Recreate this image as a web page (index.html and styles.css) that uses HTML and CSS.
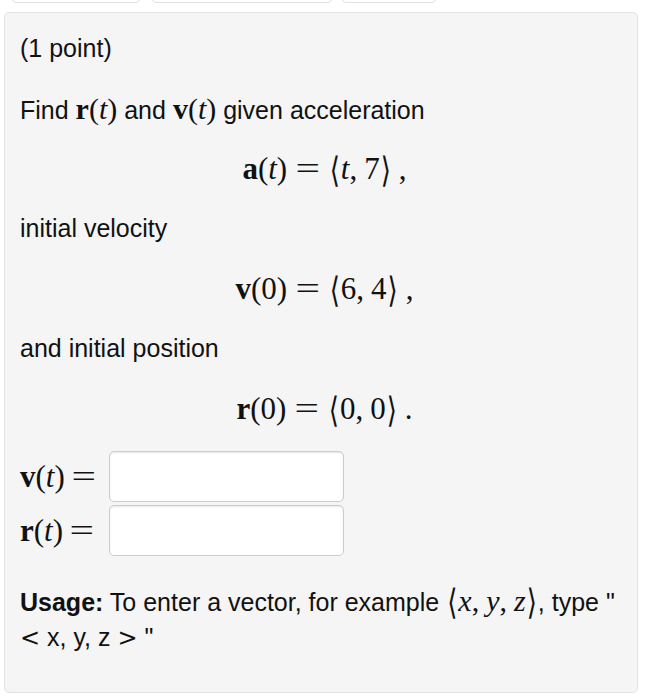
FILE: index.html
```html
<!DOCTYPE html>
<html>
<head>
<meta charset="utf-8">
<link rel="stylesheet" href="styles.css">
</head>
<body>
<div class="tabs">
  <div class="tab t1"></div>
  <div class="tab t2"></div>
  <div class="tab t3"></div>
</div>
<div class="card">
  <p class="line">(1 point)</p>
  <p class="line">Find <span class="m mi"><b>r</b>(<i>t</i>)</span> and <span class="m mi"><b>v</b>(<i>t</i>)</span> given acceleration</p>
  <div class="eq"><span class="m"><b>a</b>(<i>t</i>)<span class="rel">=</span><span class="ang">⟨</span><i>t</i>,<span class="th"></span>7<span class="ang">⟩</span><span class="th"></span>,</span></div>
  <p class="line">initial velocity</p>
  <div class="eq"><span class="m"><b>v</b>(0)<span class="rel">=</span><span class="ang">⟨</span>6,<span class="th"></span>4<span class="ang">⟩</span><span class="th"></span>,</span></div>
  <p class="line">and initial position</p>
  <div class="eq"><span class="m"><b>r</b>(0)<span class="rel">=</span><span class="ang">⟨</span>0,<span class="th"></span>0<span class="ang">⟩</span><span class="th"></span>.</span></div>
  <div class="answers">
    <div class="row"><span class="label m"><b>v</b>(<i>t</i>)<span class="rel lrel">=</span></span><input class="box" type="text"></div>
    <div class="row"><span class="label m"><b>r</b>(<i>t</i>)<span class="rel lrel">=</span></span><input class="box" type="text"></div>
  </div>
  <p class="usage"><b>Usage:</b> To enter a vector, for example <span class="m um"><span class="ang">⟨</span><i>x</i>,<span class="th"></span><i>y</i>,<span class="th"></span><i>z</i><span class="ang">⟩</span></span>, type "<br><span class="lt">&lt;</span> x, y, z <span class="lt">&gt;</span> "</p>
</div>
</body>
</html>
```
FILE: styles.css
```css
html, body {
  margin: 0;
  padding: 0;
  background: #ffffff;
}
body {
  font-family: "Liberation Sans", Arial, sans-serif;
  font-size: 25px;
  color: #111;
  width: 645px;
  height: 700px;
  overflow: hidden;
}
.tabs {
  display: flex;
  height: 3px;
  overflow: hidden;
}
.tab {
  height: 8px;
  margin-top: -5px;
  border: 1px solid #e2e2e2;
  border-radius: 5px;
  background: #fff;
  box-sizing: border-box;
}
.t1 { margin-left: 12px; width: 128px; }
.t2 { margin-left: 12px; width: 180px; }
.t3 { margin-left: 10px; width: 94px; }
.card {
  margin: 9px 7px 0 4px;
  height: 681px;
  box-sizing: border-box;
  background: #f5f5f5;
  border: 1px solid #e3e3e3;
  border-radius: 5px;
  padding: 18px 16px 0 15px;
}
.line {
  margin: 0 0 25px 0;
  line-height: 35px;
  height: 35px;
}
.m {
  font-family: "Liberation Serif", "Times New Roman", "DejaVu Serif", serif;
  font-size: 31px;
  color: #111;
}
.mi { font-size: 30px; }
.m b { font-weight: bold; }
.m i { font-style: italic; }
.rel {
  display: inline-block;
  transform: scaleX(1.4);
  margin: 0 12px;
}
.lrel { margin: 0 8px 0 10px; }
.th { display: inline-block; width: 7px; }
.ang {
  display: inline-block;
  font-family: "DejaVu Serif", serif;
  font-size: 26px;
  transform: scaleY(1.35);
  margin: 0 1px;
}
.eq {
  text-align: center;
  margin: 0 0 25px 0;
  line-height: 35px;
  height: 35px;
  padding-left: 8px;
}
.answers {
  display: flex;
  flex-direction: column;
  gap: 3px;
}
.row {
  display: flex;
  align-items: center;
}
.label {
  width: 89px;
  white-space: nowrap;
}
.box {
  width: 235px;
  height: 51px;
  box-sizing: border-box;
  background: #fff;
  border: 1px solid #cccccc;
  border-radius: 5px;
  box-shadow: inset 0 1px 2px rgba(0,0,0,0.1);
  margin: 0;
  padding: 0;
}
.usage {
  margin: 27px 0 0 0;
  line-height: 35px;
}
.usage b { font-weight: bold; }
.um { font-size: 30px; }
.lt {
  font-family: "DejaVu Sans", sans-serif;
  font-size: 24px;
}
```
